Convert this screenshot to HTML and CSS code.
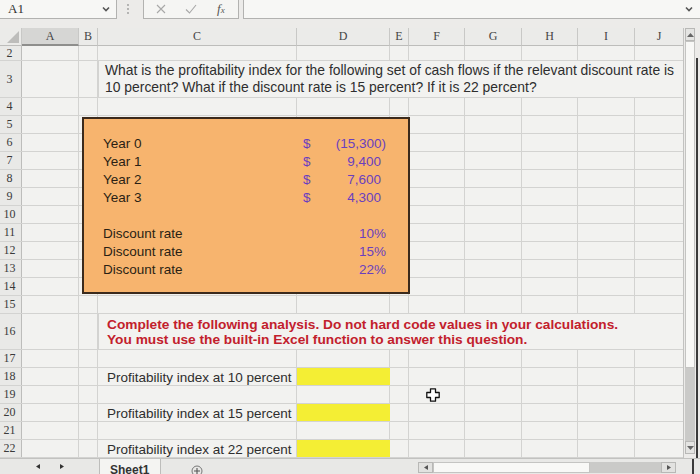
FILE: index.html
```html
<!DOCTYPE html>
<html>
<head>
<meta charset="utf-8">
<link rel="stylesheet" href="styles.css">
</head>
<body>
<div class="app">
  <div class="toolbar">
    <div class="namebox">
      <span class="nb-text">A1</span>
      <svg class="chev" width="8" height="6" viewBox="0 0 8 6"><path d="M1 1.5 L4 4.5 L7 1.5" fill="none" stroke="#555" stroke-width="1.6"/></svg>
    </div>
    <svg class="dots" width="6" height="18" viewBox="0 0 6 18"><circle cx="3" cy="5" r="0.9" fill="#9a9a9a"/><circle cx="3" cy="9" r="0.9" fill="#9a9a9a"/><circle cx="3" cy="13" r="0.9" fill="#9a9a9a"/></svg>
    <div class="fxbox">
      <svg class="ic-x" width="10" height="10" viewBox="0 0 10 10"><path d="M1 1 L9 9 M9 1 L1 9" stroke="#a8a8a8" stroke-width="1.1"/></svg>
      <svg class="ic-check" width="12" height="10" viewBox="0 0 12 10"><path d="M1 5.5 L4.5 9 L11 1" fill="none" stroke="#a8a8a8" stroke-width="1.1"/></svg>
      <span class="fx"><i>f</i><span class="fx-x">x</span></span>
    </div>
    <div class="formula">
      <svg class="chev" width="8" height="6" viewBox="0 0 8 6"><path d="M1 1.5 L4 4.5 L7 1.5" fill="none" stroke="#555" stroke-width="1.6"/></svg>
    </div>
  </div>

  <div class="main">
    <div class="sheet">
      <div class="ch corner"><svg width="12" height="12" viewBox="0 0 12 12"><path d="M12 0 L12 12 L0 12 Z" fill="#bdbdbb"/></svg></div>
      <div class="ch sel">A</div>
      <div class="ch">B</div>
      <div class="ch">C</div>
      <div class="ch">D</div>
      <div class="ch">E</div>
      <div class="ch">F</div>
      <div class="ch">G</div>
      <div class="ch">H</div>
      <div class="ch">I</div>
      <div class="ch last">J</div>

      <div class="rows">
        <div class="row h15"><div class="rn">2</div></div>
        <div class="row h37"><div class="rn">3</div></div>
        <div class="row"><div class="rn">4</div></div>
        <div class="row"><div class="rn">5</div></div>
        <div class="row"><div class="rn">6</div></div>
        <div class="row"><div class="rn">7</div></div>
        <div class="row"><div class="rn">8</div></div>
        <div class="row"><div class="rn">9</div></div>
        <div class="row"><div class="rn">10</div></div>
        <div class="row"><div class="rn">11</div></div>
        <div class="row"><div class="rn">12</div></div>
        <div class="row"><div class="rn">13</div></div>
        <div class="row"><div class="rn">14</div></div>
        <div class="row"><div class="rn">15</div></div>
        <div class="row h36"><div class="rn">16</div></div>
        <div class="row"><div class="rn">17</div></div>
        <div class="row"><div class="rn">18</div></div>
        <div class="row"><div class="rn">19</div></div>
        <div class="row"><div class="rn">20</div></div>
        <div class="row"><div class="rn">21</div></div>
        <div class="row"><div class="rn">22</div></div>
      </div>

      <div class="vl c2"></div>
      <div class="vl c3"></div>
      <div class="vl c4"></div>
      <div class="vl c5"></div>
      <div class="vl c6"></div>
      <div class="vl c7"></div>
      <div class="vl c8"></div>
      <div class="vl c9"></div>
      <div class="vl c10"></div>

      <div class="q">What is the profitability index for the following set of cash flows if the relevant discount rate is<br>10 percent? What if the discount rate is 15 percent? If it is 22 percent?</div>
      <div class="warn">Complete the following analysis. Do not hard code values in your calculations.<br>You must use the built-in Excel function to answer this question.</div>

      <div class="box"></div>

      <div class="lbl r6">Year 0</div>
      <div class="lbl r7">Year 1</div>
      <div class="lbl r8">Year 2</div>
      <div class="lbl r9">Year 3</div>
      <div class="amt r6"><span>$</span><span>(15,300)</span></div>
      <div class="amt r7"><span>$</span><span class="pos">9,400</span></div>
      <div class="amt r8"><span>$</span><span class="pos">7,600</span></div>
      <div class="amt r9"><span>$</span><span class="pos">4,300</span></div>

      <div class="lbl r11">Discount rate</div>
      <div class="lbl r12">Discount rate</div>
      <div class="lbl r13">Discount rate</div>
      <div class="pct r11">10%</div>
      <div class="pct r12">15%</div>
      <div class="pct r13">22%</div>

      <div class="pl r18">Profitability index at 10 percent</div>
      <div class="pl r20">Profitability index at 15 percent</div>
      <div class="pl r22">Profitability index at 22 percent</div>
      <div class="yel r18"></div>
      <div class="yel r20"></div>
      <div class="yel r22"></div>

      <svg class="cursor" width="14" height="14" viewBox="0 0 14 14"><path d="M4.5 0.8 H9.5 V4.5 H13.2 V9.5 H9.5 V13.2 H4.5 V9.5 H0.8 V4.5 H4.5 Z" fill="#ffffff" stroke="#111" stroke-width="1.3" stroke-linejoin="round"/></svg>
    </div>

    <div class="vscroll">
      <div class="vbar">
        <div class="vbtn"><svg width="7" height="4" viewBox="0 0 7 4"><path d="M0 4 L3.5 0 L7 4 Z" fill="#666"/></svg></div>
        <div class="vthumb"></div>
        <div class="vtrack"></div>
        <div class="vbtn"><svg width="7" height="4" viewBox="0 0 7 4"><path d="M0 0 L3.5 4 L7 0 Z" fill="#666"/></svg></div>
      </div>
      <div class="vedge"></div>
    </div>
  </div>

  <div class="tabbar">
    <div class="nav">
      <svg width="4" height="5" viewBox="0 0 4 5"><path d="M4 0 L0 2.5 L4 5 Z" fill="#333"/></svg>
      <svg width="4" height="5" viewBox="0 0 4 5"><path d="M0 0 L4 2.5 L0 5 Z" fill="#333"/></svg>
    </div>
    <div class="tab">Sheet1</div>
    <div class="addsheet"><svg width="12" height="12" viewBox="0 0 12 12"><circle cx="6" cy="6" r="5" fill="none" stroke="#777" stroke-width="1"/><path d="M6 3 V9 M3 6 H9" stroke="#555" stroke-width="1.1"/></svg></div>
    <div class="hscroll">
      <div class="hbtn"><svg width="4" height="5" viewBox="0 0 4 5"><path d="M4 0 L0 2.5 L4 5 Z" fill="#555"/></svg></div>
      <div class="hthumb"></div>
      <div class="htrack"></div>
      <div class="hbtn"><svg width="4" height="5" viewBox="0 0 4 5"><path d="M0 0 L4 2.5 L0 5 Z" fill="#555"/></svg></div>
    </div>
    <div class="tedge"></div>
  </div>
</div>
</body>
</html>
```

FILE: styles.css
```css
* { box-sizing: border-box; }
html, body { margin: 0; padding: 0; }
body {
  width: 700px;
  height: 474px;
  overflow: hidden;
  background: #ecebe9;
  font-family: "Liberation Sans", Arial, sans-serif;
}
.app {
  display: flex;
  flex-direction: column;
  width: 700px;
  height: 474px;
  overflow: hidden;
}

/* ---------- toolbar ---------- */
.toolbar {
  height: 28px;
  flex-shrink: 0;
  display: flex;
  align-items: flex-start;
  background: #ecebe9;
}
.namebox {
  width: 118px;
  height: 20px;
  margin-left: -1px;
  margin-top: -1px;
  border: 1px solid #b2b2b0;
  background: #f7f7f5;
  display: flex;
  align-items: center;
  justify-content: space-between;
  padding: 0 6px 0 8px;
}
.nb-text {
  font-family: "Liberation Serif", serif;
  font-size: 13px;
  color: #333;
}
.dots { margin-left: 8px; margin-right: 12px; }
.fxbox {
  width: 96px;
  height: 20px;
  margin-top: -1px;
  border: 1px solid #b2b2b0;
  background: #f5f5f3;
  display: flex;
  align-items: center;
  padding-left: 12px;
}
.ic-check { margin-left: 19px; }
.fx {
  margin-left: 20px;
  font-family: "Liberation Serif", serif;
  font-size: 13px;
  color: #555;
}
.fx-x { font-size: 9px; font-style: italic; }
.formula {
  flex: 1;
  height: 20px;
  margin-top: -1px;
  margin-left: 4px;
  margin-right: -1px;
  border: 1px solid #b2b2b0;
  background: #f7f7f5;
  display: flex;
  justify-content: flex-end;
  align-items: center;
  padding-right: 7px;
}

/* ---------- sheet ---------- */
.main {
  display: flex;
  height: 430px;
  flex-shrink: 0;
}
.sheet {
  position: relative;
  width: 683px;
  display: grid;
  grid-template-columns: 22px 57px 19px 199px 93px 19px 56px 57px 56px 57px 48px;
  grid-template-rows: 18px 15px 37px repeat(12, 18px) 36px repeat(6, 18px);
  background: #f2f2f0;
}
.ch {
  grid-row: 1;
  background: #ebebe9;
  border-right: 1px solid #c8c8c6;
  border-bottom: 1px solid #bdbdbb;
  font-family: "Liberation Serif", serif;
  font-size: 12px;
  color: #444;
  display: flex;
  align-items: center;
  justify-content: center;
}
.ch.corner { justify-content: flex-end; align-items: flex-end; padding: 0 2px 2px 0; }
.ch.sel { background: #d6d6d4; border-bottom: 2px solid #8e8e8c; }
.ch.last { border-right: none; }

.rows {
  grid-column: 1 / -1;
  grid-row: 2 / -1;
  display: flex;
  flex-direction: column;
}
.row {
  height: 18px;
  display: flex;
  border-bottom: 1px solid #d3d3d1;
}
.row.h15 { height: 15px; }
.row.h37 { height: 37px; }
.row.h36 { height: 36px; }
.rn {
  width: 22px;
  background: #e9e9e7;
  border-right: 1px solid #bdbdbb;
  font-family: "Liberation Serif", serif;
  font-size: 12px;
  color: #3a3a3a;
  display: flex;
  align-items: center;
  justify-content: center;
  padding-right: 2px;
}

.vl { grid-row: 2 / -1; border-right: 1px solid #d3d3d1; }
.c2 { grid-column: 2; }
.c3 { grid-column: 3; }
.c4 { grid-column: 4; }
.c5 { grid-column: 5; }
.c6 { grid-column: 6; }
.c7 { grid-column: 7; }
.c8 { grid-column: 8; }
.c9 { grid-column: 9; }
.c10 { grid-column: 10; }

.r6 { grid-row: 6; }
.r7 { grid-row: 7; }
.r8 { grid-row: 8; }
.r9 { grid-row: 9; }
.r11 { grid-row: 11; }
.r12 { grid-row: 12; }
.r13 { grid-row: 13; }
.r18 { grid-row: 18; }
.r20 { grid-row: 20; }
.r22 { grid-row: 22; }

.q {
  grid-column: 4 / 12;
  grid-row: 3;
  background: #f2f2f0;
  border-bottom: 1px solid #d3d3d1;
  border-left: 1px solid #d3d3d1;
  padding-left: 6px;
  display: flex;
  align-items: center;
  font-size: 13.9px;
  line-height: 17px;
  color: #2e2e2e;
  white-space: nowrap;
}
.warn {
  grid-column: 4 / 12;
  grid-row: 16;
  background: #f2f2f0;
  border-bottom: 1px solid #d3d3d1;
  border-left: 1px solid #d3d3d1;
  padding-left: 8px;
  padding-top: 1px;
  display: flex;
  align-items: center;
  font-size: 13.7px;
  line-height: 15px;
  font-weight: bold;
  color: #c2202c;
  white-space: nowrap;
}

.box {
  grid-column: 3 / 7;
  grid-row: 5 / 15;
  margin: 1px -1px 2px 3px;
  background: #f7b46e;
  border: 2px solid #3b2a1c;
}
.lbl {
  grid-column: 4;
  padding-left: 5px;
  display: flex;
  align-items: center;
  font-size: 13.5px;
  color: #2a1f14;
  white-space: nowrap;
}
.amt {
  grid-column: 5;
  display: flex;
  justify-content: space-between;
  align-items: center;
  padding: 0 4px 0 6px;
  font-size: 13.5px;
  color: #6a3fbf;
}
.amt .pos { padding-right: 5px; }
.pct {
  grid-column: 5;
  display: flex;
  justify-content: flex-end;
  align-items: center;
  padding-right: 4px;
  font-size: 13.5px;
  color: #6a3fbf;
}

.pl {
  grid-column: 4;
  padding-left: 9px;
  display: flex;
  align-items: center;
  font-size: 13.5px;
  color: #2e2e2e;
  white-space: nowrap;
}
.yel {
  grid-column: 5;
  background: #f4ee34;
  margin-bottom: 1px;
}

.cursor {
  position: absolute;
  left: 426px;
  top: 360px;
}

/* ---------- vertical scrollbar ---------- */
.vscroll {
  width: 17px;
  display: flex;
  background: #ecebe9;
  border-left: 1px solid #c2c2c0;
}
.vbar {
  width: 12px;
  display: flex;
  flex-direction: column;
  padding: 0 1px 4px 1px;
}
.vbtn {
  height: 13px;
  flex-shrink: 0;
  border: 1px solid #b8b8b6;
  background: #e4e4e2;
  display: flex;
  align-items: center;
  justify-content: center;
}
.vthumb {
  height: 327px;
  flex-shrink: 0;
  background: #f8f8f6;
  border: 1px solid #c4c4c2;
}
.vtrack { flex: 1; background: #cacac8; }
.vedge {
  width: 2px;
  margin-top: 30px;
  background: #3a3a3a;
}

/* ---------- tab bar ---------- */
.tabbar {
  flex: 1;
  display: flex;
  align-items: stretch;
  background: #e8e8e6;
  border-top: 1px solid #c2c2c0;
  overflow: hidden;
}
.nav {
  width: 100px;
  flex-shrink: 0;
  display: flex;
  align-items: center;
  padding-left: 36px;
  gap: 20px;
  border-right: 1px solid #bdbdbb;
}
.tab {
  width: 61px;
  flex-shrink: 0;
  padding: 4px 0 0 10px;
  background: #f4f4f2;
  border-right: 1px solid #bdbdbb;
  font-size: 12px;
  font-weight: bold;
  color: #333;
  line-height: 14px;
}
.addsheet {
  width: 257px;
  flex-shrink: 0;
  padding: 4px 0 0 30px;
}
.hscroll {
  width: 258px;
  flex-shrink: 0;
  display: flex;
  margin-top: 3px;
  margin-bottom: 1px;
}
.hbtn {
  width: 15px;
  border: 1px solid #b8b8b6;
  background: #e2e2e0;
  display: flex;
  align-items: center;
  justify-content: center;
}
.hthumb {
  width: 157px;
  background: #f8f8f6;
  border: 1px solid #c4c4c2;
}
.htrack { flex: 1; background: #cacac8; }
.tedge {
  width: 2px;
  margin-left: 16px;
  background: #3a3a3a;
}
```
